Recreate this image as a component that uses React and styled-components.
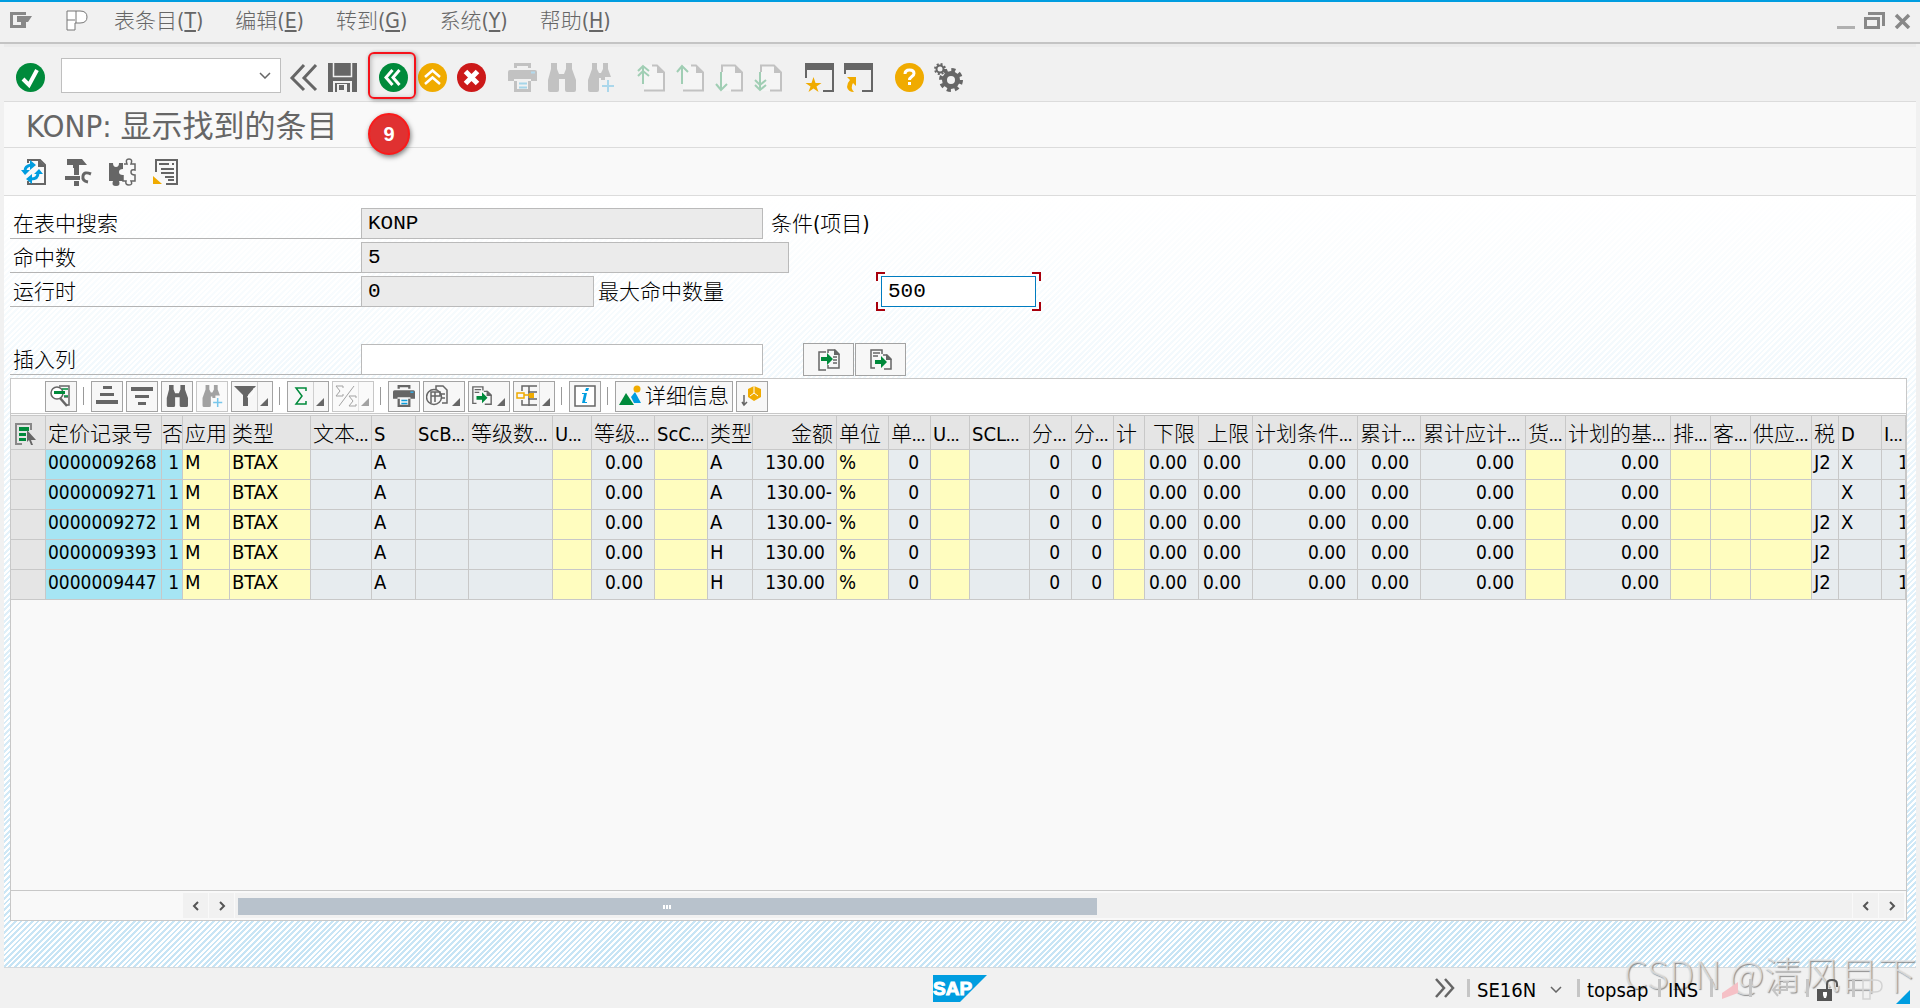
import { useState } from 'react'
import styled, { createGlobalStyle } from 'styled-components'

const GlobalStyle = createGlobalStyle`
  :root {
    --grey: #666;
    --line: #c8c8c8;
    --green: #008a3b;
    --orange: #f0ab00;
    --blue: #009de0;
    --ui: 'DejaVu Sans Condensed', 'Noto Sans CJK SC', sans-serif;
    --mono: 'Liberation Mono', 'Noto Sans CJK SC', monospace;
  }
  * {
    box-sizing: border-box;
  }
  body {
    margin: 0;
    background: #f1f1f1;
    font-family: var(--ui);
    font-size: 20px;
    font-weight: 300;
    color: #000;
  }
  button, input {
    font: inherit;
    color: inherit;
    margin: 0;
    padding: 0;
    border: 0;
    border-radius: 0;
    background: none;
    outline: none;
  }
  svg {
    display: block;
    flex: none;
  }
`

const Window = styled.div`
  position: relative;
  display: flex;
  flex-direction: column;
  min-height: 100vh;
  border-top: 2px solid var(--blue);
  overflow: hidden;
`

const MenuBar = styled.nav`
  display: flex;
  align-items: center;
  height: 42px;
  padding: 0 9px 3px 10px;
  border-bottom: 2px solid #c4c4c4;
  color: var(--grey);
`

const MenuIcon = styled.button`
  width: 56px;
`

const MenuList = styled.div`
  display: flex;
  flex: 1;
  gap: 32px;
  margin-left: -8px;
  font-size: 21px;
  button {
    line-height: 32px;
    white-space: nowrap;
  }
`

const WindowButtons = styled.div`
  display: flex;
  align-items: center;
  gap: 9px;
`

const Main = styled.main`
  display: flex;
  flex: 1;
  flex-direction: column;
  margin: 0 4px;
  border-top: 3px solid #ebebeb;
`

const Toolbar = styled.div`
  display: flex;
  align-items: center;
  gap: 10px;
  height: 55px;
  padding: 6px 12px 0;
  border-bottom: 1px solid #dcdcdc;
  color: var(--grey);
`

const ToolGroup = styled.div`
  display: flex;
  gap: 10px;
  margin-left: ${(props) => (props.$first ? '0' : '12px')};
  opacity: ${(props) => (props.$disabled ? 0.33 : 1)};
`

const CommandField = styled.div`
  display: flex;
  align-items: center;
  width: 220px;
  height: 35px;
  margin: 0 -2px 3px 6px;
  padding-right: 9px;
  border: 1px solid #bfbfbf;
  background: #fff;
  input {
    flex: 1;
    min-width: 0;
    height: 100%;
    padding-left: 5px;
  }
`

const Marked = styled.div`
  position: relative;
  display: flex;
`

const Frame = styled.span`
  position: absolute;
  left: -11px;
  top: -11px;
  width: 48px;
  height: 47px;
  border: 2px solid #f5121a;
  border-radius: 6px;
  box-shadow: 1px 1px 4px rgba(0, 0, 0, 0.4), inset 1px 1px 5px rgba(0, 0, 0, 0.25);
  pointer-events: none;
`

const Step = styled.span`
  position: absolute;
  left: -11px;
  top: 50px;
  z-index: 1;
  width: 42px;
  height: 42px;
  border: 2px solid #fb1a1a;
  border-radius: 50%;
  background: #e03131;
  box-shadow: 1px 2px 5px rgba(0, 0, 0, 0.5);
  color: #fff;
  font: bold 20px/38px 'Liberation Sans', sans-serif;
  text-align: center;
`

const Title = styled.h1`
  height: 46px;
  margin: 0;
  padding: 2px 0 0 22px;
  border-bottom: 1px solid #dcdcdc;
  background: #f9f9f9;
  color: var(--grey);
  font-size: 31px;
  font-weight: 400;
  line-height: 44px;
`

const AppBar = styled.div`
  display: flex;
  align-items: center;
  gap: 16px;
  height: 48px;
  padding: 0 16px;
  border-bottom: 1px solid #dcdcdc;
  background: #f9f9f9;
  color: var(--grey);
`

const Screen = styled.section`
  display: flex;
  flex: 1;
  flex-direction: column;
  padding: 12px 9px 46px 6px;
  border-bottom: 1px solid #d5d9dc;
  background:
    linear-gradient(#fff, rgba(255, 255, 255, 0)),
    repeating-linear-gradient(135deg, #c6e4f5 0 2px, #fff 2px 4px);
`

const Form = styled.div`
  display: flex;
  flex-direction: column;
  gap: 3px;
  margin-bottom: 3px;
  font-family: var(--mono);
  font-size: 21px;
`

const Row = styled.div`
  display: flex;
  align-items: center;
  height: 31px;
`

const Label = styled.label`
  width: 351px;
  height: 31px;
  padding-left: 3px;
  border-bottom: 1px solid #b4b4b4;
  line-height: 35px;
`

const InlineLabel = styled.label`
  width: ${(props) => props.$width || 'auto'};
  height: 31px;
  padding-left: 4px;
  line-height: 35px;
`

const Description = styled.span`
  height: 31px;
  padding-left: 8px;
  font-family: var(--ui);
  line-height: 33px;
`

const Field = styled.input`
  width: ${(props) => props.$width};
  height: 31px;
  padding: 0 6px;
  border: 1px solid ${(props) => (props.$active ? '#007cc0' : '#bababa')};
  background: ${(props) => (props.readOnly ? '#ebebeb' : '#fff')};
`

const Focus = styled.div`
  position: relative;
`

const Corner = styled.span`
  position: absolute;
  width: 9px;
  height: 9px;
  border: 0 solid #a8000c;
  ${(props) => props.$v}: -4px;
  ${(props) => props.$h}: -5px;
  border-${(props) => props.$v}-width: 2px;
  border-${(props) => props.$h}-width: 2px;
`

const ColumnButtons = styled.div`
  display: flex;
  gap: 1px;
  margin-left: 40px;
  button {
    display: grid;
    place-items: center;
    width: 51px;
    height: 33px;
    border: 1px solid #a3a3a3;
    background: #f7f7f7;
    color: var(--grey);
  }
`

const Grid = styled.div`
  display: flex;
  flex: 1;
  flex-direction: column;
  border: 1px solid var(--line);
  background: #f9f9f9;
  overflow: hidden;
`

const GridToolbar = styled.div`
  display: flex;
  align-items: center;
  gap: 3px;
  height: 35px;
  padding-left: 34px;
  border-bottom: 1px solid var(--line);
  background: #fff;
  color: var(--grey);
`

const GridButton = styled.button`
  display: flex;
  align-items: center;
  justify-content: center;
  width: ${(props) => props.$width || '32px'};
  height: 31px;
  border: 1px solid #a3a3a3;
  background: #f7f7f7;
  opacity: ${(props) => (props.disabled ? 0.6 : 1)};
  span {
    margin-left: 4px;
    color: #000;
    font-size: 21px;
    line-height: 28px;
    white-space: nowrap;
  }
`

const Split = styled.i`
  display: flex;
  align-items: flex-end;
  justify-content: center;
  align-self: stretch;
  width: 13px;
  margin-left: 1px;
  padding-bottom: 5px;
  border-left: 1px solid ${(props) => (props.$line ? '#cfcfcf' : 'transparent')};
`

const Separator = styled.i`
  width: 8px;
  height: 18px;
  border-left: 1px solid #999;
  margin-left: 3px;
  margin-right: -3px;
`

const TableArea = styled.div`
  flex: 1;
  padding-top: 1px;
  overflow: hidden;
`

const Table = styled.table`
  width: 100%;
  min-width: 1895px;
  border-spacing: 0;
  table-layout: fixed;
`

const HeadCell = styled.th`
  height: 35px;
  padding: ${(props) => (props.$tight ? '2px 0 0' : '2px 3px 0 2px')};
  border: 1px solid var(--line);
  border-width: 1px 1px 1px 0;
  background: #e5e5e5;
  font-size: ${(props) => (props.$latin ? '20px' : '21px')};
  font-weight: 300;
  line-height: 26px;
  text-align: ${(props) => (props.$right ? 'right' : 'left')};
  white-space: nowrap;
  overflow: hidden;
`

const Dots = styled.span`
  font-family: Roboto, sans-serif;
  font-size: 16px;
  font-weight: 500;
  line-height: 20px;
`

const tones = {
  key: '#a6e5f4',
  text: '#fffdbf',
  plain: '#e7ecef',
  head: '#e5e5e5'
}

const Cell = styled.td`
  height: 30px;
  padding: 0 ${(props) => props.$end || '3px'} 4px ${(props) => props.$start || '2px'};
  border: 1px solid var(--line);
  border-width: 0 1px 1px 0;
  background: ${(props) => tones[props.$tone]};
  font-size: ${(props) => (props.$digits ? '19px' : '20px')};
  line-height: 25px;
  text-align: ${(props) => (props.$right ? 'right' : 'left')};
  white-space: nowrap;
  overflow: hidden;
`

const ScrollBar = styled.div`
  display: flex;
  align-items: center;
  gap: 1px;
  height: 30px;
  padding: 0 2px 0 172px;
  border-top: 1px solid var(--line);
  color: var(--grey);
  button {
    display: grid;
    place-items: center;
    width: 25px;
    height: 25px;
    background: #f1f1f1;
  }
`

const Track = styled.div`
  flex: 1;
  height: 25px;
  padding: 5px 3px 3px;
  background: #f1f1f1;
`

const Thumb = styled.div`
  display: flex;
  align-items: center;
  justify-content: center;
  gap: 1px;
  height: 17px;
  background: #b8c2cc;
  i {
    width: 2px;
    height: 4px;
    background: #fff;
  }
`

const StatusBar = styled.footer`
  display: grid;
  grid-template-columns: 1fr auto 1fr;
  align-items: center;
  height: 40px;
`

const StatusItems = styled.div`
  position: relative;
  z-index: 1;
  display: flex;
  align-items: center;
  justify-content: flex-end;
  height: 40px;
  padding-right: 10px;
`

const StatusItem = styled.div`
  display: flex;
  align-items: center;
  justify-content: space-between;
  width: ${(props) => props.$width};
  padding-top: 3px;
  line-height: 28px;
  white-space: nowrap;
  button {
    display: flex;
    flex: 1;
    align-items: center;
    justify-content: space-between;
    padding-right: 8px;
  }
`

const Bar = styled.i`
  width: 3px;
  height: 18px;
  margin: 0 7px;
  background: #c6c6c6;
`

const Resize = styled.svg`
  align-self: flex-end;
  margin-bottom: 4px;
`

const Watermark = styled.div`
  position: absolute;
  right: 4px;
  bottom: 15px;
  color: rgba(232, 232, 232, 0.75);
  font: 300 38px/40px 'Noto Sans CJK SC', sans-serif;
  text-shadow: 1px 1px 1px rgba(110, 110, 110, 0.75);
  white-space: nowrap;
  pointer-events: none;
`

const Icon = ({ size = 29, box = 29, children }) => (
  <svg width={size} height={size} viewBox={`0 0 ${box} ${box}`} fill="currentColor" aria-hidden="true">
    {children}
  </svg>
)

const Stroke = ({ d, w = 2, c = 'currentColor' }) => <path d={d} fill="none" stroke={c} strokeWidth={w} />

const Chevron = ({ w = 12, h = 7 }) => (
  <svg width={w} height={h} viewBox="0 0 12 7" aria-hidden="true">
    <path d="M1 1l5 5 5-5" fill="none" stroke="#666" strokeWidth="1.500" />
  </svg>
)

const Arrow = ({ left }) => (
  <svg width="8" height="10" viewBox="0 0 8 10" aria-hidden="true">
    <path d={left ? 'M6 1L2 5l4 4' : 'M2 1l4 4-4 4'} fill="none" stroke="#555" strokeWidth="2" />
  </svg>
)

const MenuMark = () => (
  <svg width="8" height="8" viewBox="0 0 8 8" aria-hidden="true"><path d="M8 0v8H0z" fill="#666" /></svg>
)

const Disc = ({ color, children }) => (
  <Icon>
    <circle cx="14.5" cy="14.5" r="14.5" fill={color} />
    {children}
  </Icon>
)

const Printer = ({ size }) => (
  <Icon size={size}>
    <Stroke d="M7.500 5V1.500h14V5" w={3} />
    <path d="M2 7h25q2 0 2 2v9h-6v-2H6v2H0V9q0-2 2-2z" />
    <path d="M23 8.500h4v2h-4z" fill="#39aee6" />
    <Stroke d="M7.500 18v9.500h14V18" w={3} />
    <Stroke d="M11 20.500h8M11 24.500h8" c="#0d9ddb" />
  </Icon>
)

const BINOCULARS = 'M4 0h6v6l2 5h5l2-5V0h6v6l4 11v10q0 2-2 2h-7q-2 0-2-2V16h-6v11q0 2-2 2H3q-2 0-2-2V17L4 6z'

const Binoculars = ({ size }) => <Icon size={size}><path d={BINOCULARS} /></Icon>

const BinocularsNext = ({ size }) => (
  <Icon size={size}>
    <path d="M6 0h5v6l2 4h2l2-4V0h5v6l3 8h-6v3h-4v-2h-2v12q0 2-2 2H4q-2 0-2-2V17L6 6z" />
    <Stroke d="M22 17v12M16 23h12" c="#1fa3e0" />
  </Icon>
)

// "edge" doubles the arrow head for first / last page
const Page = ({ arrow, edge }) => {
  const up = edge ? 'M6 21V3M1 8l5-5 6 5M1 13l5-5 6 5' : 'M6 21V3M1 9l5-6 6 6'
  const down = edge ? 'M6 9v18M1 17l5 5 6-5M1 22l5 5 6-5' : 'M6 9v18M1 21l5 6 6-6'
  return (
    <Icon>
      <path d="M7 2h13l8 8v18H7z" fill="#fff" />
      <Stroke d={arrow === 'up' ? 'M15 2.500h5l7 7v18H7' : 'M7 9V2.500h13l7 7v18H16'} />
      <path d="M20 2l8 8h-8z" />
      <Stroke d={arrow === 'up' ? up : down} c="var(--green)" />
    </Icon>
  )
}

const SessionWindow = ({ children, left }) => (
  <Icon>
    <path d={`M0 0h29v29H18v-2h9V7H2v${left}H0z`} />
    {children}
  </Icon>
)

const Gears = () => (
  <Icon>
    <circle cx="17" cy="17" r="6.500" fill="none" stroke="currentColor" strokeWidth="5" />
    <circle cx="17" cy="17" r="10" fill="none" stroke="currentColor" strokeWidth="4" strokeDasharray="4 3.854" />
    <circle cx="6" cy="6" r="3.500" fill="none" stroke="currentColor" strokeWidth="2" />
    <circle cx="6" cy="6" r="5" fill="none" stroke="currentColor" strokeWidth="2" strokeDasharray="2 1.927" />
  </Icon>
)

const CopyIn = () => (
  <Icon size={24} box={24}>
    <Stroke d="M9 4H2v18h7M11 5V2h7l4 4v14H11v-3M16 9h4M16 12h4M16 15h4" w={1.5} />
    <path d="M17 1l6 6h-6z" />
    <path d="M4 9h6V5l6 6-6 6v-4H4z" fill="var(--green)" />
  </Icon>
)

const CopyOut = ({ size = 24 }) => (
  <Icon size={size} box={24}>
    <Stroke d="M6 20H2V2h11v4M4 5h7M4 8h5M14 7h4l4 4v10h-7" w={1.5} />
    <path d="M17 6l6 6h-6z" />
    <path d="M6 12h6V8l6 6-6 6v-4H6z" fill="var(--green)" />
  </Icon>
)

const GRID_TOOLS = [
  { label: '明细', icon: (
    <Icon size={22} box={22}>
      <Stroke d="M9 1h10v19h-3M14 12h4" w={1.5} />
      <circle cx="7" cy="8" r="6" fill="#fff" stroke="currentColor" strokeWidth="1.500" />
      <Stroke d="M12 4h6M14 11h4" w={1.5} c="var(--green)" />
      <path d="M4 6h11v3H4z" fill="var(--green)" />
      <Stroke d="M10 13l7 8" w={2.5} />
    </Icon>
  ) },
  'sep',
  { label: '升序排序', icon: <Icon size={22} box={22}><path d="M7 1h9v3H7zM4 8h14v3H4zM0 15h22v4H0z" /></Icon> },
  { label: '降序排序', icon: <Icon size={22} box={22}><path d="M0 2h22v4H0zM4 10h14v3H4zM7 17h8v3H7z" /></Icon> },
  { label: '查找', icon: <Binoculars size={22} /> },
  { label: '查找下一个', disabled: true, icon: <BinocularsNext size={22} /> },
  { label: '过滤', split: true, line: true, icon: (
    <Icon size={22} box={22}>
      <path d="M0 1h22l-8 9v11h-5V10z" />
      <Stroke d="M13 12q8-1 7-9" w={1} c="#fff" />
    </Icon>
  ) },
  'sep',
  { label: '总计', split: true, line: true, icon: <Icon size={22} box={22}><Stroke d="M16 6V3H6l6 8-6 8h10v-3" w={1.5} c="var(--green)" /></Icon> },
  { label: '小计', split: true, line: true, disabled: true, icon: (
    <Icon size={22} box={22}><Stroke d="M8 3V1H1l4 5-4 5h7V9M19 1L4 21M21 13v-2h-7l4 5-4 5h7v-2" w={1} /></Icon>
  ) },
  'sep',
  { label: '打印', icon: <Printer size={22} /> },
  { label: '视图', split: true, icon: (
    <Icon size={22} box={22}>
      <Stroke d="M10 5V1h7l4 4v13h-5" w={1.5} />
      <circle cx="8" cy="12" r="7.500" fill="#f7f7f7" stroke="currentColor" strokeWidth="1.500" />
      <Stroke d="M5 18V7h9v4H5M9 7v10M15 9h4M15 13h4" w={1.5} />
    </Icon>
  ) },
  { label: '导出', split: true, icon: <CopyOut size={22} /> },
  { label: '布局', split: true, line: true, icon: (
    <Icon size={22} box={22}>
      <Stroke d="M6 6V1h15M13 1v20M6 15v5h15M12 7h9M12 14h9" w={1.5} />
      <path d="M0 7h9v7H0z" fill="#f7f7f7" />
      <Stroke d="M1 8h7v5H1zM8 10h8" w={1.5} c="var(--orange)" />
      <path d="M13 8h5v5h-5z" fill="var(--orange)" />
    </Icon>
  ) },
  'sep',
  { label: '信息', icon: (
    <Icon size={22} box={22}>
      <path d="M1 1h20v20H1z" fill="#fff" stroke="#666" strokeWidth="1.500" />
      <path d="M12 3h3l-1 3h-3zM8 8h5l-2 9h2v1H8l2-9H8z" fill="var(--blue)" />
    </Icon>
  ) },
  'sep',
  { label: '详细信息', text: '详细信息', width: '118px', icon: (
    <Icon size={22} box={22}>
      <path d="M12 12l4-5 6 11h-7z" fill="var(--blue)" />
      <path d="M0 20L7 8l8 12z" fill="var(--green)" />
      <circle cx="18" cy="4" r="3.500" fill="var(--orange)" />
    </Icon>
  ) },
  { label: '转换', icon: (
    <Icon size={22} box={22}>
      <Stroke d="M3 10v10M1 17l2 3 3-3" w={1.5} />
      <path d="M7 4l6-3 7 3v8l-7 4-6-4z" fill="var(--orange)" />
      <Stroke d="M13 1v7M13 8l-4 3M13 8l4 3" w={1} c="#fff" />
    </Icon>
  ) }
]

// n = right aligned number column
const COLUMNS = [
  { w: 116, t: '定价记录号', tone: 'key', digits: true },
  { w: 21, t: '否', tone: 'key', right: true, tight: true, digits: true },
  { w: 47, t: '应用', tone: 'text' },
  { w: 81, t: '类型', tone: 'text' },
  { w: 61, t: '文本', dots: true },
  { w: 44, t: 'S', latin: true },
  { w: 53, t: 'ScB', latin: true, dots: true },
  { w: 84, t: '等级数', dots: true },
  { w: 39, t: 'U', latin: true, dots: true, tone: 'text' },
  { w: 63, t: '等级', dots: true, n: true },
  { w: 53, t: 'ScC', latin: true, dots: true, tone: 'text' },
  { w: 45, t: '类型' },
  { w: 84, t: '金额', n: true, headRight: true },
  { w: 52, t: '单位', tone: 'text' },
  { w: 42, t: '单', dots: true, n: true },
  { w: 39, t: 'U', latin: true, dots: true, tone: 'text' },
  { w: 60, t: 'SCL', latin: true, dots: true },
  { w: 42, t: '分', dots: true, n: true },
  { w: 42, t: '分', dots: true, n: true },
  { w: 31, t: '计', tone: 'text' },
  { w: 54, t: '下限', n: true, headRight: true },
  { w: 54, t: '上限', n: true, headRight: true },
  { w: 105, t: '计划条件', dots: true, n: true },
  { w: 63, t: '累计', dots: true, n: true },
  { w: 105, t: '累计应计', dots: true, n: true },
  { w: 40, t: '货', dots: true, tone: 'text' },
  { w: 105, t: '计划的基', dots: true, n: true },
  { w: 40, t: '排', dots: true, tone: 'text' },
  { w: 40, t: '客', dots: true, tone: 'text' },
  { w: 61, t: '供应', dots: true, tone: 'text' },
  { w: 27, t: '税' },
  { w: 43, t: 'D', latin: true },
  { t: 'I', latin: true, dots: true, digits: true, start: '16px' }
]

const entry = (number, type, amount, tax, deleted) => [
  number, '1', 'M', 'BTAX', '', 'A', '', '', '', '0.00', '', type, amount, '%', '0', '', '',
  '0', '0', '', '0.00', '0.00', '0.00', '0.00', '0.00', '', '0.00', '', '', '', tax, deleted, '1'
]

const ROWS = [
  entry('0000009268', 'A', '130.00', 'J2', 'X'),
  entry('0000009271', 'A', '130.00-', '', 'X'),
  entry('0000009272', 'A', '130.00-', 'J2', 'X'),
  entry('0000009393', 'H', '130.00', 'J2', ''),
  entry('0000009447', 'H', '130.00', 'J2', '')
]

const MENUS = [['表条目', 'T'], ['编辑', 'E'], ['转到', 'G'], ['系统', 'Y'], ['帮助', 'H']]

const cellEnd = (column, value) => {
  if (!column.n) return '3px'
  return value.endsWith('-') ? '4px' : '11px'
}

const App = () => {
  const [command, setCommand] = useState('')
  const [maxHits, setMaxHits] = useState('500')
  const [insertColumn, setInsertColumn] = useState('')

  return (
    <Window>
      <GlobalStyle />
      <MenuBar>
        <MenuIcon aria-label="系统菜单">
          <svg width="22" height="17" viewBox="0 0 22 17" fill="#888">
            <path d="M0 0h16v3H3v10h13v3H0z" />
            <path d="M7 4h15l-4 6h-2v3h-5v-3H7z" />
          </svg>
        </MenuIcon>
        <MenuIcon aria-label="P">
          <svg width="22" height="21" viewBox="0 0 22 21" fill="#fff" stroke="#777">
            <path d="M1 1h13q7 0 7 6t-7 6H9v7H1z" />
            <path d="M10 1v12M1 10h8" />
          </svg>
        </MenuIcon>
        <MenuList>
          {MENUS.map(([name, key]) => (
            <button key={name}>{name}(<u>{key}</u>)</button>
          ))}
        </MenuList>
        <WindowButtons>
          <button aria-label="最小化">
            <svg width="18" height="17" viewBox="0 0 18 17"><path d="M0 14h18v3H0z" fill="#b0b0b0" /></svg>
          </button>
          <button aria-label="还原">
            <svg width="21" height="17" viewBox="0 0 21 17" fill="#888">
              <path d="M4 0h17v14h-3V3H4z" />
              <path d="M0 5h16v12H0zM3 8v6h10V8z" fillRule="evenodd" />
            </svg>
          </button>
          <button aria-label="关闭">
            <svg width="17" height="17" viewBox="0 0 17 17"><path d="M2 3l13 13M15 3L2 16" stroke="#888" strokeWidth="3.500" /></svg>
          </button>
        </WindowButtons>
      </MenuBar>

      <Main>
        <Toolbar>
          <button aria-label="回车">
            <Disc color="var(--green)"><Stroke d="M7 16l6 6 8-15" w={4} c="#fff" /></Disc>
          </button>
          <CommandField>
            <input aria-label="命令" value={command} onChange={(e) => setCommand(e.target.value)} />
            <button aria-label="历史记录"><Chevron /></button>
          </CommandField>
          <ToolGroup $first>
            <button aria-label="收起"><Icon><Stroke d="M15 2L3 15l12 12M27 2L15 15l12 12" w={3} /></Icon></button>
            <button aria-label="保存">
              <Icon>
                <path d="M0 0h29v29H0z" />
                <Stroke d="M5.500 0v13.500h18V0" w={1.5} c="#f1f1f1" />
                <path d="M5 18h19v11h-2v-9H7v9H5z" fill="#f1f1f1" />
                <path d="M9 21h10v8H9z" fill="#f1f1f1" />
                <path d="M11 22h5v5h-5z" />
              </Icon>
            </button>
          </ToolGroup>
          <ToolGroup>
            <Marked>
              <button aria-label="返回">
                <Disc color="var(--green)"><Stroke d="M13.500 7L7 14.500l6.500 7.500M20.500 7L14 14.500l6.500 7.500" w={3} c="#fff" /></Disc>
              </button>
              <Frame />
              <Step>9</Step>
            </Marked>
            <button aria-label="退出">
              <Disc color="var(--orange)"><Stroke d="M7 14l7.500-6.500L22 14M7 21l7.500-6.500L22 21" w={2.5} c="#fff" /></Disc>
            </button>
            <button aria-label="取消">
              <Disc color="#cc1919"><Stroke d="M8.500 8.500l12 12M20.500 8.500l-12 12" w={5} c="#fff" /></Disc>
            </button>
          </ToolGroup>
          <ToolGroup $disabled>
            <button disabled aria-label="打印"><Printer /></button>
            <button disabled aria-label="查找"><Binoculars /></button>
            <button disabled aria-label="查找下一个"><BinocularsNext /></button>
          </ToolGroup>
          <ToolGroup $disabled>
            <button disabled aria-label="首页"><Page arrow="up" edge /></button>
            <button disabled aria-label="上一页"><Page arrow="up" /></button>
            <button disabled aria-label="下一页"><Page arrow="down" /></button>
            <button disabled aria-label="末页"><Page arrow="down" edge /></button>
          </ToolGroup>
          <ToolGroup>
            <button aria-label="新建会话">
              <SessionWindow left={8}>
                <path d="M8.500 14l2 6h6l-5 3.500 2 5.500-5-3.500-5 3.500 2-5.500-5-3.500h6z" fill="var(--orange)" />
              </SessionWindow>
            </button>
            <button aria-label="创建快捷方式">
              <SessionWindow left={4}>
                <path d="M3 14h9v9l-3-3q-3 5 1 9-6 0-7-5 0-4 3-7z" fill="var(--orange)" />
              </SessionWindow>
            </button>
          </ToolGroup>
          <ToolGroup>
            <button aria-label="帮助">
              <Disc color="var(--orange)">
                <Stroke d="M10 11q0-4 4.500-4t4.500 3.500c0 3-4.500 3-4.500 6.500" w={3} c="#fff" />
                <path d="M13 19h3v3h-3z" fill="#fff" />
              </Disc>
            </button>
            <button aria-label="定制本地布局"><Gears /></button>
          </ToolGroup>
        </Toolbar>

        <Title>KONP: 显示找到的条目</Title>

        <AppBar>
          <button aria-label="刷新">
            <Icon size={28} box={28}>
              <Stroke d="M8 5V2h12l5 5v19H8v-3" />
              <path d="M18 1l8 8h-8z" />
              <Stroke d="M5 13q0-5 6-6M18 15q0 6-7 6" w={3} c="var(--blue)" />
              <path d="M10 2l6 5-6 5zM12 16v10l-6-5zM1 12h9l-5 5zM14 16h9l-4-5z" fill="var(--blue)" />
            </Icon>
          </button>
          <button aria-label="工具">
            <Icon size={28} box={28}>
              <path d="M3 1h15l5 6h-8v3H9V7H3zM10 9h5v8h-5zM10 23h5v5h-5zM1 18h15v4H1z" />
              <Stroke d="M27 16q-7-3-8 2t5 6" w={3} />
            </Icon>
          </button>
          <button aria-label="扩展">
            <Icon size={28} box={28}>
              <path d="M1 5h4q0 4 3 4t3-4h4v6q-4 0-4 3t4 3v6h-4q2 5-3 5t-3-5H1z" />
              <Stroke d="M16 6h3q-2-5 2-5t2 5h4v6q-4-1-4 2t4 3v6h-4q2 4-2 4t-3-4h-3v-6" w={1.5} />
            </Icon>
          </button>
          <button aria-label="列表">
            <Icon size={28} box={28}>
              <Stroke d="M4 14V2h21v24H14M7 6h10M20 6h2M9 11h13M9 15h13M13 19h9M16 22h6" />
              <path d="M1 18l9 8H1z" fill="var(--orange)" />
            </Icon>
          </button>
        </AppBar>

        <Screen>
          <Form>
            <Row>
              <Label htmlFor="table">在表中搜索</Label>
              <Field id="table" $width="402px" value="KONP" readOnly />
              <Description>条件(项目)</Description>
            </Row>
            <Row>
              <Label htmlFor="hits">命中数</Label>
              <Field id="hits" $width="428px" value="5" readOnly />
            </Row>
            <Row>
              <Label htmlFor="runtime">运行时</Label>
              <Field id="runtime" $width="233px" value="0" readOnly />
              <InlineLabel htmlFor="max" $width="287px">最大命中数量</InlineLabel>
              <Focus>
                <Field id="max" $width="155px" $active value={maxHits} onChange={(e) => setMaxHits(e.target.value)} />
                <Corner $v="top" $h="left" />
                <Corner $v="top" $h="right" />
                <Corner $v="bottom" $h="left" />
                <Corner $v="bottom" $h="right" />
              </Focus>
            </Row>
            <Row />
            <Row>
              <Label htmlFor="insert">插入列</Label>
              <Field id="insert" $width="402px" value={insertColumn} onChange={(e) => setInsertColumn(e.target.value)} />
              <ColumnButtons>
                <button aria-label="插入列"><CopyIn /></button>
                <button aria-label="删除列"><CopyOut /></button>
              </ColumnButtons>
            </Row>
          </Form>

          <Grid>
            <GridToolbar>
              {GRID_TOOLS.map((tool, i) => tool === 'sep' ? <Separator key={i} /> : (
                <GridButton
                  key={i}
                  aria-label={tool.label}
                  disabled={tool.disabled}
                  $width={tool.width || (tool.split ? '42px' : '32px')}
                >
                  {tool.icon}
                  {tool.text && <span>{tool.text}</span>}
                  {tool.split && <Split $line={tool.line}><MenuMark /></Split>}
                </GridButton>
              ))}
            </GridToolbar>
            <TableArea>
              <Table>
                <colgroup>
                  <col style={{ width: 35 }} />
                  {COLUMNS.map((column, i) => <col key={i} style={{ width: column.w }} />)}
                </colgroup>
                <thead>
                  <tr>
                    <HeadCell aria-label="全选">
                      <Icon size={24} box={24}>
                        <Stroke d="M9 22H3V2h15v6" c="#888" />
                        <path d="M6 5h10v4H6zM6 11h7v3H6zM6 16h7v3H6z" fill="var(--green)" />
                        <path d="M14 8l9 10h-5l2 5h-2l-2-5-2 2z" fill="#666" />
                      </Icon>
                    </HeadCell>
                    {COLUMNS.map((column, i) => (
                      <HeadCell key={i} $latin={column.latin} $right={column.headRight} $tight={column.tight}>
                        {column.t}{column.dots && <Dots>...</Dots>}
                      </HeadCell>
                    ))}
                  </tr>
                </thead>
                <tbody>
                  {ROWS.map((row) => (
                    <tr key={row[0]}>
                      <Cell $tone="head" />
                      {COLUMNS.map((column, i) => (
                        <Cell
                          key={i}
                          $tone={column.tone || 'plain'}
                          $digits={column.n || column.digits}
                          $right={column.n || column.right}
                          $start={column.start}
                          $end={cellEnd(column, row[i])}
                        >
                          {row[i]}
                        </Cell>
                      ))}
                    </tr>
                  ))}
                </tbody>
              </Table>
            </TableArea>
            <ScrollBar>
              <button aria-label="向左"><Arrow left /></button>
              <button aria-label="向右"><Arrow /></button>
              <Track>
                <Thumb style={{ width: '53.3%' }}><i /><i /><i /></Thumb>
              </Track>
              <button aria-label="向左滚动"><Arrow left /></button>
              <button aria-label="向右滚动"><Arrow /></button>
            </ScrollBar>
          </Grid>
        </Screen>
      </Main>

      <StatusBar>
        <span />
        <svg width="54" height="27" viewBox="0 0 54 27" role="img" aria-label="SAP">
          <path d="M0 0h54L27 27H0z" fill="#009de0" />
          <text x="0" y="20" fill="#fff" stroke="#fff" fontFamily="Liberation Sans" fontWeight="700" fontSize="19">SAP</text>
        </svg>
        <StatusItems>
          <Icon size={20} box={20}><Stroke d="M1 1l8 9-8 9M10 1l8 9-8 9" w={2.5} c="#666" /></Icon>
          <StatusItem $width="5px" />
          <Bar />
          <StatusItem $width="93px"><button>SE16N <Chevron /></button></StatusItem>
          <Bar />
          <StatusItem $width="64px">topsap</StatusItem>
          <Bar />
          <StatusItem $width="35px">INS</StatusItem>
          <Bar />
          <StatusItem $width="22px">
            <Icon size={20} box={20}><path d="M2 13L18 2v11L2 19z" fill="#f5c0c6" /></Icon>
          </StatusItem>
          <Bar />
          <StatusItem $width="40px">
            <Icon size={40} box={40}><Stroke d="M19 14l-5 6 5 6M14 20h14v-8M24 12h6" c="#c4c4c4" /></Icon>
          </StatusItem>
          <Bar />
          <StatusItem $width="29px">
            <Icon size={24} box={24}>
              <path d="M1 11h15v12H1z" fill="#555" />
              <path d="M7 14h4v3l-1 3H8l-1-3z" fill="#fff" />
              <Stroke d="M11 11V6q0-4 5-4t5 4v3" c="#555" />
            </Icon>
          </StatusItem>
          <Bar />
          <StatusItem $width="34px">
            <Icon size={22} box={22}><Stroke d="M1 1h12q7 0 7 6t-7 6H8v7H1z" w={1.5} c="#d3d3d3" /></Icon>
          </StatusItem>
          <Resize width="14" height="14" viewBox="0 0 14 14"><path d="M14 0v14H0z" fill="#009de0" /></Resize>
        </StatusItems>
      </StatusBar>
      <Watermark>CSDN @清风目下</Watermark>
    </Window>
  )
}

export default App
